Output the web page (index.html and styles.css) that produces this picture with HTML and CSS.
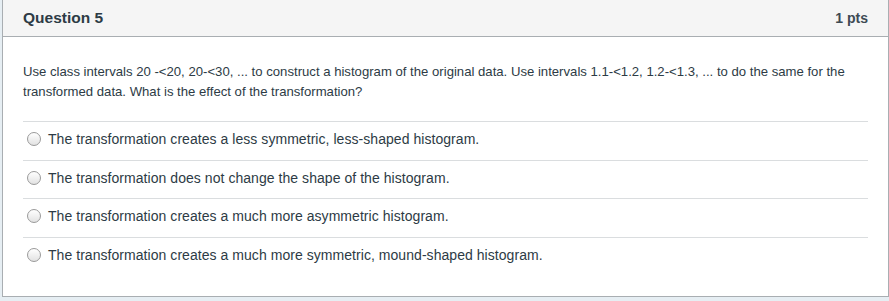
FILE: index.html
```html
<!DOCTYPE html>
<html>
<head>
<meta charset="utf-8">
<link rel="stylesheet" href="styles.css">
</head>
<body>
<div class="card">
  <div class="header">
    <span class="title">Question 5</span>
    <span class="pts">1 pts</span>
  </div>
  <div class="content">
    <p class="question">Use class intervals 20 -&lt;20, 20-&lt;30, ... to construct a histogram of the original data. Use intervals 1.1-&lt;1.2, 1.2-&lt;1.3, ... to do the same for the transformed data. What is the effect of the transformation?</p>
    <div class="answers">
      <label class="answer"><span class="radio"></span><span class="atext">The transformation creates a less symmetric, less-shaped histogram.</span></label>
      <label class="answer"><span class="radio"></span><span class="atext">The transformation does not change the shape of the histogram.</span></label>
      <label class="answer"><span class="radio"></span><span class="atext">The transformation creates a much more asymmetric histogram.</span></label>
      <label class="answer"><span class="radio"></span><span class="atext">The transformation creates a much more symmetric, mound-shaped histogram.</span></label>
    </div>
  </div>
</div>
</body>
</html>
```

FILE: styles.css
```css
html, body {
  margin: 0;
  padding: 0;
}
body {
  background: #e6eef3;
  font-family: "Liberation Sans", Arial, sans-serif;
  color: #2d3b45;
  height: 301px;
}
.card {
  margin-left: 2px;
  width: 887px;
  height: 297px;
  box-sizing: border-box;
  background: #fff;
  border: 1px solid #a9aeb2;
  border-top: none;
}
.header {
  height: 37px;
  box-sizing: border-box;
  background: #f5f5f5;
  border-bottom: 1px solid #a9aeb2;
  display: flex;
  align-items: center;
  justify-content: space-between;
  padding: 0 20px;
}
.title {
  font-weight: bold;
  font-size: 15.5px;
}
.pts {
  font-weight: bold;
  font-size: 14px;
  color: #3d4a54;
}
.content {
  padding: 0 20px;
}
.question {
  margin: 0;
  padding: 25px 0 19px;
  font-size: 13.15px;
  line-height: 20px;
}
.answers {
  display: flex;
  flex-direction: column;
}
.answer {
  display: flex;
  align-items: center;
  height: 38.7px;
  box-sizing: border-box;
  border-top: 1px solid #dadddf;
  padding-left: 4px;
  padding-bottom: 4px;
  font-size: 14px;
  letter-spacing: 0.05px;
}
.radio {
  width: 14px;
  height: 14px;
  box-sizing: border-box;
  border-radius: 50%;
  border: 1px solid #9a9a9a;
  background: linear-gradient(#ffffff, #e2e2e2);
  margin-right: 7px;
  flex-shrink: 0;
}
```
